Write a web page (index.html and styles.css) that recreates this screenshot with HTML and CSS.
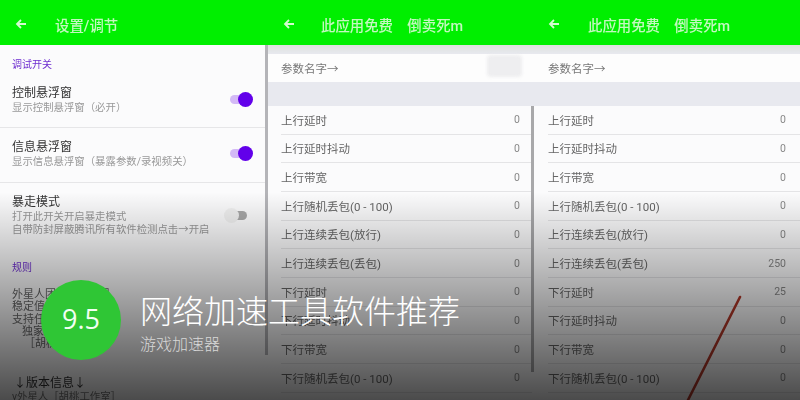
FILE: index.html
```html
<!DOCTYPE html>
<html lang="zh">
<head>
<meta charset="utf-8">
<title>网络加速工具软件推荐</title>
<link rel="stylesheet" href="styles.css">
</head>
<body>
<main class="shot">
  <div class="screens">
    <section class="screen first">
      <header class="bar"><svg class="back" viewBox="0 0 12 12"><path d="M11 6H2M6 2 2 6l4 4"/></svg><span class="bar-title">设置/调节</span></header>
      <div class="settings">
        <h3 class="group">调试开关</h3>
        <div class="pref one">
          <div><p class="pref-name">控制悬浮窗</p><p class="pref-sub">显示控制悬浮窗（必开）</p></div>
          <span class="toggle on"></span>
        </div>
        <div class="pref two">
          <div><p class="pref-name">信息悬浮窗</p><p class="pref-sub">显示信息悬浮窗（暴露参数/录视频关）</p></div>
          <span class="toggle on"></span>
        </div>
        <div class="pref three">
          <div><p class="pref-name">暴走模式</p><p class="pref-sub">打开此开关开启暴走模式<br>自带防封屏蔽腾讯所有软件检测点击→开启</p></div>
          <span class="toggle off"></span>
        </div>
        <h3 class="group">规则</h3>
        <div class="rule-text">
          <p>外星人团队倾力出品</p>
          <p>稳定值得信赖</p>
          <p>支持任意机型</p>
          <p class="indent">独家首发</p>
          <p class="indent2">［胡桃工作室］</p>
        </div>
        <p class="version">↓版本信息↓</p>
        <p class="version-sub">v外星人［胡桃工作室］</p>
      </div>
    </section>
    <section class="screen second">
      <header class="bar"><svg class="back" viewBox="0 0 12 12"><path d="M11 6H2M6 2 2 6l4 4"/></svg><span class="bar-title">此应用免费　倒卖死m</span></header>
      <div class="band top"></div>
      <div class="param"><span>参数名字→</span><i class="smudge"></i></div>
      <div class="band"></div>
      <ul class="list">
        <li><span>上行延时</span><b>0</b></li>
        <li><span>上行延时抖动</span><b>0</b></li>
        <li><span>上行带宽</span><b>0</b></li>
        <li><span>上行随机丢包(0 - 100)</span><b>0</b></li>
        <li><span>上行连续丢包(放行)</span><b>0</b></li>
        <li><span>上行连续丢包(丢包)</span><b>0</b></li>
        <li><span>下行延时</span><b>0</b></li>
        <li><span>下行延时抖动</span><b>0</b></li>
        <li><span>下行带宽</span><b>0</b></li>
        <li><span>下行随机丢包(0 - 100)</span><b>0</b></li>
      </ul>
    </section>
    <section class="screen third">
      <header class="bar"><svg class="back" viewBox="0 0 12 12"><path d="M11 6H2M6 2 2 6l4 4"/></svg><span class="bar-title">此应用免费　倒卖死m</span></header>
      <div class="band top"></div>
      <div class="param"><span>参数名字→</span></div>
      <div class="band"></div>
      <ul class="list">
        <li><span>上行延时</span><b>0</b></li>
        <li><span>上行延时抖动</span><b>0</b></li>
        <li><span>上行带宽</span><b>0</b></li>
        <li><span>上行随机丢包(0 - 100)</span><b>0</b></li>
        <li><span>上行连续丢包(放行)</span><b>0</b></li>
        <li><span>上行连续丢包(丢包)</span><b>250</b></li>
        <li><span>下行延时</span><b>25</b></li>
        <li><span>下行延时抖动</span><b>0</b></li>
        <li><span>下行带宽</span><b>0</b></li>
        <li><span>下行随机丢包(0 - 100)</span><b>0</b></li>
      </ul>
    </section>
  </div>
  <i class="scroll s1"></i>
  <i class="scroll s2"></i>
  <svg class="pen" viewBox="0 0 800 400"><path d="M740 297 688 400"/></svg>
  <div class="scrim"></div>
  <div class="info">
    <div class="score">9.5</div>
    <div class="info-text">
      <h1>网络加速工具软件推荐</h1>
      <p>游戏加速器</p>
    </div>
  </div>
</main>
</body>
</html>
```
FILE: styles.css
```css
* { box-sizing: border-box; margin: 0; padding: 0; }
html, body { width: 800px; height: 400px; overflow: hidden; background: #fafafa; }
body { font-family: Roboto, "Noto Sans CJK SC", sans-serif; }
.shot { position: relative; width: 800px; height: 400px; overflow: hidden; }
.screens { display: grid; grid-template-columns: 268px 266px 266px; height: 400px; filter: blur(.45px); }
.screen { height: 400px; overflow: hidden; background: #fbfbfc; }

.bar { display: flex; align-items: center; height: 45px; padding: 3px 0 0 15px; background: #00ef00; color: #c4f8c0; font-size: 14.4px; font-weight: 500; white-space: nowrap; }
.back { flex: none; width: 12px; height: 12px; fill: none; stroke: #d4fad0; stroke-width: 1.8; }
.first .back { margin-right: 28px; }
.second .back { margin-right: 26px; }
.third .bar { padding-left: 14px; }
.third .back { margin-right: 28px; }

.settings { padding-top: 13px; }
.group { padding-left: 12px; font-size: 10px; line-height: 14px; font-weight: 400; color: #6f2fd0; }
.pref { display: flex; justify-content: space-between; align-items: flex-start; padding: 10px 18px 0 12px; border-bottom: 1px solid #e6e6e8; }
.pref.one { height: 56px; padding-top: 12px; }
.pref.two { height: 55px; }
.pref.three { height: 78px; border-bottom: 0; }
.pref-name { font-size: 12px; line-height: 18px; color: #333; }
.pref-sub { font-size: 10.4px; line-height: 12.5px; color: #999; white-space: nowrap; }
.toggle { position: relative; flex: none; width: 20px; height: 9px; border-radius: 5px; margin-top: 11px; }
.toggle::after { content: ""; position: absolute; top: -3px; width: 15px; height: 15px; border-radius: 50%; }
.toggle.on { background: #d3b9f6; }
.toggle.on::after { right: -3px; background: #6200ea; }
.toggle.off { margin-top: 18px; margin-right: 3px; background: #a8a8a8; }
.toggle.off::after { left: -3px; background: #f0f0f0; }
.rule-text { margin-top: 14px; padding-left: 12px; font-size: 11px; line-height: 12.3px; color: #666; }
.indent { padding-left: 10px; }
.indent2 { padding-left: 12px; }
.version { margin-top: 24px; padding-left: 14px; font-family: "Noto Sans CJK SC", sans-serif; font-size: 12px; line-height: 16px; color: #333; }
.version-sub { padding-left: 12px; font-size: 10.4px; line-height: 14px; color: #777; }

.band { height: 24px; background: #e8e9ef; }
.band.top { height: 9px; background: linear-gradient(#dde2dd, #e8e9ef); }
.param { position: relative; display: flex; align-items: center; height: 28px; padding-left: 13px; background: #fdfdfd; font-size: 11.5px; color: #777; }
.smudge { position: absolute; top: 1px; right: 12px; width: 35px; height: 22px; border-radius: 4px; background: #eeeef0; filter: blur(1.5px); }
.third .param { padding-left: 14px; }
.list { list-style: none; padding-left: 13px; }
.third .list { padding-left: 14px; }
.list li { display: flex; align-items: center; justify-content: space-between; height: 28.67px; padding-right: 14px; border-bottom: 1px solid #e4e4e6; font-size: 11.5px; color: #666; }
.second .list li { margin-right: 2px; padding-right: 12px; }
.list b { font-weight: 400; font-size: 10.5px; color: #888; }

.scroll { position: absolute; width: 3px; }
.s1 { left: 265px; top: 45px; height: 310px; background: #b4b4b8; }
.s2 { left: 531px; top: 106px; height: 266px; background: #a8a8aa; }

.pen { position: absolute; inset: 0; width: 800px; height: 400px; fill: none; stroke: #b5392a; stroke-width: 2.6; stroke-linecap: round; }

.scrim { position: absolute; inset: 0; background: linear-gradient(to bottom, rgba(0,0,0,0) 48%, rgba(0,0,0,.7) 100%); }

.info { position: absolute; left: 41px; top: 280px; display: flex; align-items: flex-start; gap: 19px; }
.score { display: flex; align-items: center; justify-content: center; width: 80px; height: 80px; padding-bottom: 4px; border-radius: 50%; background: #2fc635; color: #f2fff2; font-size: 27px; font-family: "Open Sans", sans-serif; }
.info-text { color: #fff; font-family: "Noto Sans CJK SC", sans-serif; }
.info-text h1 { margin-top: 7px; font-size: 32px; line-height: 44px; font-weight: 300; white-space: nowrap; }
.info-text p { margin-top: 1px; font-size: 16px; line-height: 22px; font-weight: 300; color: #d8d8d8; }
```
